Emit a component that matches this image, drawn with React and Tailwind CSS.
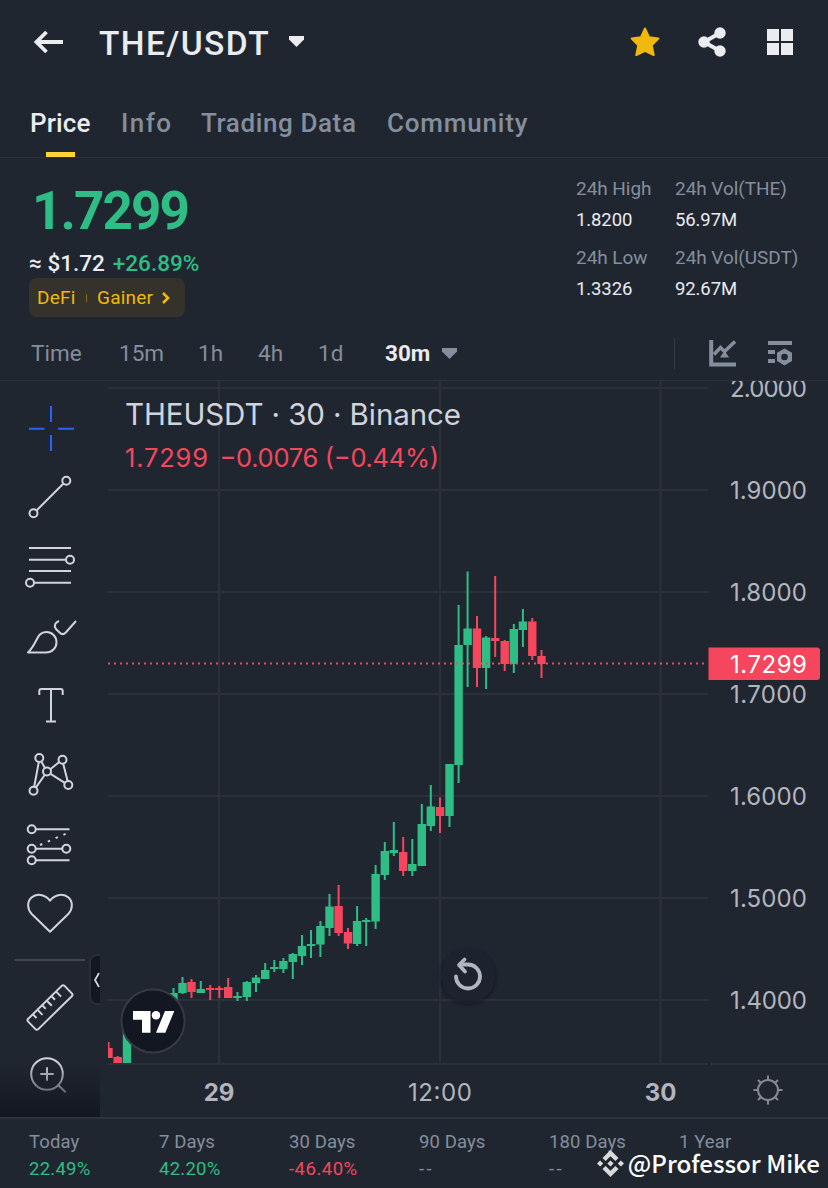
import { clsx } from 'clsx';

const tabs = [
  { label: 'Price', width: 'w-[91px]', tracking: 'tracking-[0.1px]' },
  { label: 'Info', width: 'w-[80px]', tracking: 'tracking-[1.4px]' },
  { label: 'Trading Data', width: 'w-[186px]', tracking: 'tracking-[0.6px]' },
  { label: 'Community', width: 'w-[150px]', tracking: 'tracking-[0.8px]' },
];

const stats = [
  { label: '24h High', value: '1.8200' },
  { label: '24h Vol(THE)', value: '56.97M' },
  { label: '24h Low', value: '1.3326' },
  { label: '24h Vol(USDT)', value: '92.67M' },
];

const intervals = [
  { label: 'Time', width: 'w-[88px]' },
  { label: '15m', width: 'w-[79px]' },
  { label: '1h', width: 'w-[60px]' },
  { label: '4h', width: 'w-[60px]' },
  { label: '1d', width: 'w-[67px]' },
];

const performance = [
  { label: 'Today', value: '22.49%', color: 'text-[#2ebd85] tracking-[0.25px]' },
  { label: '7 Days', value: '42.20%', color: 'text-[#2ebd85] tracking-[0.25px]' },
  { label: '30 Days', value: '-46.40%', color: 'text-[#f6465d] tracking-[0.5px]' },
  { label: '90 Days', value: '--', color: 'text-[#848e9c] tracking-[2.5px]' },
  { label: '180 Days', value: '--', color: 'text-[#848e9c] tracking-[2.5px]' },
  { label: '1 Year', value: '--', color: 'text-[#848e9c] tracking-[2.5px]' },
];

// x, high, body top, body bottom, low, up
const candles = [
  [108.5, 1042, 1048, 1058, 1058, false],
  [117.7, 1056, 1057, 1063, 1063, false],
  [127, 1015, 1015, 1063, 1063, true],
  [173.5, 988, 993, 1001, 1001, true],
  [182.5, 977, 983, 993, 994, true],
  [191.5, 979, 982, 992, 998, false],
  [200.8, 981, 989, 993, 993, true],
  [210.2, 985, 988, 990, 1000, false],
  [219.3, 986, 988, 990, 998, false],
  [228.2, 978, 987, 998, 998, false],
  [237.5, 992, 996, 998, 1001, true],
  [246.8, 981, 982, 997, 1001, true],
  [256, 975, 977.5, 983, 992, true],
  [265.2, 963, 970, 979, 979, true],
  [274.3, 960, 967, 969, 972, true],
  [283.4, 958, 961, 969, 973, true],
  [292.8, 953, 954, 962, 979, true],
  [302, 935, 946, 956, 965, true],
  [311, 930, 944, 946, 958, true],
  [320.4, 921, 926, 944.5, 957, true],
  [329.5, 894, 906.5, 928, 936, true],
  [338.6, 885, 906, 933, 936, false],
  [348, 928, 932, 943.5, 949, false],
  [357.1, 906, 921, 944, 946, true],
  [366.2, 918, 920, 922, 946, true],
  [375.6, 865, 874, 921.5, 929, true],
  [384.8, 842, 851, 875, 880, true],
  [393.8, 822, 850, 853, 856, true],
  [403.2, 837, 852, 871, 876, false],
  [412.3, 839, 864, 871, 876, true],
  [421.8, 804, 824, 866, 866, true],
  [430.8, 785, 806.5, 826, 831, true],
  [440, 797.5, 807, 816, 833, false],
  [449.5, 764, 764, 816, 827, true],
  [458.6, 605, 645, 765, 783, true],
  [467.6, 571.5, 628.5, 645, 687, true],
  [477, 616, 628.5, 668, 687, false],
  [486.1, 636, 637.5, 668, 689, true],
  [495.2, 576, 638, 641, 657, false],
  [504.7, 640, 641, 664, 671, false],
  [513.8, 624, 629, 664, 673, true],
  [522.9, 609, 621.5, 630, 647, true],
  [532.3, 618, 621.5, 656, 660, false],
  [541.5, 650, 656, 664, 678, false],
];

const priceTicks = [
  { label: '2.0000', y: 388 },
  { label: '1.9000', y: 490 },
  { label: '1.8000', y: 592 },
  { label: '1.7000', y: 694 },
  { label: '1.6000', y: 796 },
  { label: '1.5000', y: 898 },
  { label: '1.4000', y: 1000 },
];

const Caret = ({ className }) => (
  <svg className={className} width="15" height="11" viewBox="0 0 15 11" fill="currentColor">
    <path d="M0 0h15v3.500L7.500 11 0 3.500z" />
  </svg>
);

const Header = () => (
  <header className="flex h-[84px] items-center pl-[34px] pr-[35px] text-[#eaecef]">
    <svg width="30" height="24" viewBox="0 0 30 24" fill="none" stroke="currentColor" strokeWidth="3.8">
      <path d="M2 12h27M12.500 2 2.500 12l10 10" />
    </svg>
    <h1 className="ml-[35px] mt-[3px] w-[190px] whitespace-nowrap text-[33.500px] font-medium leading-[40px] tracking-[1.4px]">
      THE/USDT
    </h1>
    <Caret className="mt-[-1px]" />
    <div className="ml-auto flex items-center">
      <svg width="30" height="30" viewBox="0 0 30 30" fill="#f0b90b" stroke="#f0b90b" strokeWidth="2" strokeLinejoin="round">
        <path d="M15 1.500 19 10.200 28.300 11.500 21.700 18.200 23.700 28 15 23.800 6.300 28 8.300 18.200 1.700 11.500 11 10.200z" />
      </svg>
      <svg className="ml-[38px]" width="28" height="30" viewBox="0 0 28 30" fill="currentColor">
        <path d="M6 15 22 6M6 15l16 9" stroke="currentColor" strokeWidth="4" />
        <circle cx="6" cy="15" r="5.700" />
        <circle cx="22" cy="6" r="5.700" />
        <circle cx="22" cy="24" r="5.700" />
      </svg>
      <div className="ml-[41px] grid grid-cols-2 gap-[2px]">
        <span className="size-[12px] bg-current" />
        <span className="size-[12px] bg-current" />
        <span className="size-[12px] bg-current" />
        <span className="size-[12px] bg-current" />
      </div>
    </div>
  </header>
);

const Tabs = () => (
  <nav className="flex h-[74px] border-b border-[#2b313a] pl-[30px]">
    {tabs.map((tab, i) => (
      <div
        key={tab.label}
        className={clsx(
          'flex flex-col whitespace-nowrap text-[26px] font-medium leading-[32px]',
          tab.width,
          tab.tracking,
          i === 0 ? 'text-[#eaecef]' : 'text-[#848e9c]'
        )}
      >
        <span className="mt-[23px]">{tab.label}</span>
        {i === 0 && <span className="ml-[16px] mt-auto h-[5px] w-[29px] bg-[#fcd535]" />}
      </div>
    ))}
  </nav>
);

const Summary = () => (
  <section className="flex h-[168px] justify-between pl-[29px]">
    <div className="flex flex-col items-start">
      <p className="ml-[3px] mt-[23px] text-[53px] font-bold leading-[60px] tracking-[-1.9px] text-[#2ebd85]">
        1.7299
      </p>
      <p className="mt-[7px] flex gap-[8px] whitespace-nowrap text-[22.500px] font-medium leading-[30px]">
        <span className="text-[#eaecef]">≈ $1.72</span>
        <span className="text-[#2ebd85]">+26.89%</span>
      </p>
      <div className="flex h-[39px] w-[156px] items-center rounded-[8px] bg-[#35322b] pl-[8px] text-[19px] text-[#f0b90b]">
        <span className="mt-[2px] w-[49px] tracking-[0.2px]">DeFi</span>
        <span className="h-[8px] w-px bg-[#8a6c16]" />
        <span className="ml-[10px] mt-[2px] w-[65px] tracking-[0.2px]">Gainer</span>
        <svg width="8" height="12" viewBox="0 0 8 12" fill="none" stroke="currentColor" strokeWidth="2.600">
          <path d="m1 1 5 5-5 5" />
        </svg>
      </div>
    </div>
    <dl className="mt-[15px] grid w-[252px] grid-cols-[99px_153px] content-start gap-y-[7px] whitespace-nowrap text-[19px]">
      {stats.map((stat) => (
        <div key={stat.label} className="h-[62px] leading-[31px]">
          <dt className="tracking-[-0.05px] text-[#848e9c]">{stat.label}</dt>
          <dd className="pt-px text-[18.500px] tracking-[-0.1px] text-[#eaecef]">{stat.value}</dd>
        </div>
      ))}
    </dl>
  </section>
);

const Intervals = () => (
  <div className="flex h-[55px] items-center border-b border-[#2b313a] pl-[31px] text-[22.500px] leading-[30px] text-[#848e9c]">
    {intervals.map((interval) => (
      <span key={interval.label} className={interval.width}>
        {interval.label}
      </span>
    ))}
    <span className="w-[57px] font-bold text-[#eaecef]">30m</span>
    <Caret />
    <span className="ml-[217px] h-[31px] w-px bg-[#333b47]" />
    <svg className="ml-[34px]" width="27" height="27" viewBox="0 0 27 27" fill="none" stroke="currentColor" strokeWidth="4">
      <path d="M2.200 0v24.500H27" />
      <path d="M5 14.500 11.500 7.500l4 4L26 1.500" strokeWidth="3.500" />
      <path d="m15.500 10.500 4.500 7h-9z" fill="currentColor" stroke="none" />
    </svg>
    <svg className="ml-[32px]" width="25" height="26" viewBox="0 0 25 26" fill="currentColor">
      <path d="M0 1h24v4H0zM0 10h7v4H0zM0 19h7v4H0z" />
      <path
        fillRule="evenodd"
        d="M16.500 8.500 24 12.700v8.300l-7.500 4.500L9 21v-8.300zM16.500 13.700a3.300 3.300 0 1 0 0 6.600 3.300 3.300 0 0 0 0-6.600z"
      />
    </svg>
  </div>
);

const Tool = ({ children }) => (
  <svg
    className="block shrink-0"
    width="100"
    height="69"
    viewBox="0 0 100 69"
    fill="none"
    stroke="#d1d4dc"
    strokeWidth="2"
  >
    {children}
  </svg>
);

const Toolbar = () => (
  <aside className="relative flex h-full w-[100px] flex-col overflow-hidden pt-[13px]">
    <Tool>
      <path stroke="#2962ff" d="M51 12v16M51 41v16M29 34.700h15.500M58 34.700h16" />
    </Tool>
    <Tool>
      <circle cx="66.300" cy="17.700" r="4" />
      <circle cx="33.500" cy="50.300" r="4" />
      <path d="M36.500 47.500 63.500 20.500" />
    </Tool>
    <Tool>
      <path d="M29 16h42M29 27.700h37M29 39h42M34 50.700h37" />
      <circle cx="70" cy="27.700" r="4" />
      <circle cx="30" cy="50.700" r="4" />
    </Tool>
    <Tool>
      <path strokeLinejoin="round" d="M28 51.500C38 42 36 31 46.500 31c5.500 0 10 4.500 10 10.200S52 51.500 46 51.500z" />
      <path d="M59 20c-4 1.500-5.500 5-3 8l3.500 3.500c2 2 4.500 1.800 6.300 0L76 20" />
    </Tool>
    <Tool>
      <path d="M39.300 25v-4q0-2 2-2h19.400q2 0 2 2v4M51 19v32.500M46 51.500h10" />
    </Tool>
    <Tool>
      <circle cx="39.300" cy="19" r="4" />
      <circle cx="62.500" cy="20.700" r="4" />
      <circle cx="47" cy="32.500" r="4" />
      <circle cx="33.500" cy="51.700" r="4" />
      <circle cx="68.300" cy="46" r="4" />
      <path d="M38.800 23 34.200 47.700M41.300 22.500l3.600 6.500M44.700 36 36 48.400M50.300 30.200l9-7.200M63.200 24.700l4.400 17.300M50.500 34.800l14.300 9" />
    </Tool>
    <Tool>
      <circle cx="31.700" cy="21.300" r="4" />
      <circle cx="31.700" cy="40.700" r="4" />
      <circle cx="66.300" cy="40.700" r="4" />
      <circle cx="31.700" cy="52.300" r="4" />
      <path d="M36 21.300h33.500M36 40.700h26.300M36 52.300h33.500" />
      <path d="M40 37l27.500-12" strokeDasharray="2.500 6" />
    </Tool>
    <Tool>
      <path
        strokeLinejoin="round"
        d="M50 54.700 31.500 36.800c-4.200-4.500-4.700-12 0-16.300 5-4.500 13.500-3.500 18.500 3.200 5-6.700 13.500-7.700 18.500-3.200 4.700 4.300 4.200 11.800 0 16.300z"
      />
    </Tool>
    <hr className="mx-auto mb-[11px] mt-[13px] h-[2px] w-[70px] shrink-0 border-0 bg-[#434651]" />
    <Tool>
      <g transform="translate(50 35.500) rotate(-44.500)">
        <rect x="-25.500" y="-7.200" width="51" height="14.400" rx="2" />
        <path d="M-17-7v5M-10.500-7v7M-4-7v5M2.500-7v7M9-7v5M15.500-7v7" />
      </g>
    </Tool>
    <Tool>
      <circle cx="47" cy="33" r="15.800" />
      <path d="M40.300 33h13.400M47 26.300v13.400M58 44l7.700 7.300" />
    </Tool>
    <div className="pointer-events-none absolute inset-x-0 bottom-0 h-[56px] bg-gradient-to-b from-[#131722]/0 to-[#131722]" />
    <button className="absolute right-[-14px] top-[573px] h-[51px] w-[25px] rounded-[8px] border-2 border-[#2a2e39] bg-[#131722]">
      <svg width="8" height="16" viewBox="0 0 8 16" className="ml-[2px]" fill="none" stroke="#d1d4dc" strokeWidth="1.800">
        <path d="M6 1 2 8l4 7" />
      </svg>
    </button>
  </aside>
);

const Candle = ({ data }) => {
  const [x, high, top, bottom, low, up] = data;
  return (
    <g fill={up ? '#2ebd85' : '#f6465d'}>
      <rect x={x - 1} y={high} width="2" height={low - high} />
      <rect x={x - 4.2} y={top} width="8.4" height={bottom - top} />
    </g>
  );
};

const Chart = () => (
  <svg
    className="block shrink-0 font-['Inter','Liberation_Sans',sans-serif]"
    width="728"
    height="736"
    viewBox="100 381 728 736"
  >
    <defs>
      <clipPath id="plot">
        <rect x="108" y="381" width="600" height="683" />
      </clipPath>
      <filter id="shadow" x="-30%" y="-30%" width="160%" height="160%">
        <feDropShadow dx="0" dy="2" stdDeviation="2" floodColor="#131722" floodOpacity="0.7" />
      </filter>
    </defs>
    <g stroke="#2b3039" strokeWidth="2">
      {priceTicks.map((tick) => (
        <path key={tick.label} d={`M108 ${tick.y}H708`} />
      ))}
      <path d="M219 381V1064M440 381V1064M660.500 381V1064" />
      <path d="M108 1064H708M711 1064H828" />
    </g>
    <g clipPath="url(#plot)">
      {candles.map((candle) => (
        <Candle key={candle[0]} data={candle} />
      ))}
    </g>
    <path d="M108 663.500H708" stroke="#f6465d" strokeWidth="2" strokeDasharray="2 4" />

    <g fill="#b2b5be" fontSize="24">
      {priceTicks.map((tick) => (
        <text key={tick.label} x="730" y={tick.y + 8.5} textLength="77">
          {tick.label}
        </text>
      ))}
    </g>
    <path d="M708.500 647.500H817q3 0 3 3v26.500q0 3-3 3H708.500z" fill="#f6465d" />
    <text x="730" y="672.500" fontSize="24" textLength="77" fill="#fff">
      1.7299
    </text>

    <text x="125" y="425" fontSize="29.500" textLength="336" fill="#d1d4dc">
      THEUSDT · 30 · Binance
    </text>
    <g fill="#f6465d" fontSize="25.500">
      <text x="125" y="467" textLength="83">
        1.7299
      </text>
      <text x="219.500" y="467" textLength="219.500">
        −0.0076 (−0.44%)
      </text>
    </g>

    <g fill="#b2b5be" fontSize="24" textAnchor="middle">
      <text x="219" y="1101" fontWeight="700">
        29
      </text>
      <text x="440" y="1101" textLength="64">
        12:00
      </text>
      <text x="660.500" y="1101" fontWeight="700">
        30
      </text>
    </g>

    <g stroke="#868993" strokeWidth="2" fill="none" transform="translate(768 1090)">
      <circle r="10" />
      <path d="M0-10v-4.500M0 10v4.500M-10 0h-4.500M10 0h4.500M-7.200-7.200-10-10M7.200-7.200 10-10M-7.200 7.200-10 10M7.200 7.200 10 10" />
    </g>

    <circle cx="153" cy="1021" r="31.500" fill="#131722" stroke="#363a45" strokeWidth="2" />
    <g fill="#fff">
      <path d="M133 1011h17.500v21.700H142V1019.800h-9z" />
      <circle cx="156" cy="1015.300" r="4.200" />
      <path d="M165 1011h9.300l-9 21.700H156z" />
    </g>

    <circle cx="468" cy="975" r="27" fill="#1e232e" filter="url(#shadow)" />
    <g fill="none" stroke="#b2b5be" strokeWidth="3.800" strokeLinecap="round" strokeLinejoin="round">
      <path d="M456 976.500a12 12 0 1 0 12-12H460" />
      <path d="M464.500 959.500 459 965l6 6.500" />
    </g>
  </svg>
);

const Performance = () => (
  <footer className="flex h-[71px] border-t-2 border-[#2e343e] pl-[29px] pt-[10px]">
    {performance.map((period) => (
      <div key={period.label} className="w-[130px] shrink-0 text-[18.500px] leading-[27px]">
        <p className="tracking-[0.1px] text-[#848e9c]">{period.label}</p>
        <p className={period.color}>{period.value}</p>
      </div>
    ))}
  </footer>
);

const Watermark = () => (
  <div className="absolute bottom-[7px] right-[8px] flex items-center whitespace-nowrap text-[24.100px] font-medium leading-[36px] text-white">
    <svg className="mr-[4px]" width="27" height="27" viewBox="0 0 27 27" fill="#d9dadc">
      <path d="M13.500 0 21.500 8l-3.100 3.100-4.900-4.900-4.900 4.900L5.500 8zM13.500 27 5.500 19l3.100-3.100 4.900 4.900 4.900-4.900 3.100 3.100zM13.500 10.400l3.100 3.100-3.100 3.100-3.100-3.100zM3.100 10.400l3.100 3.100-3.100 3.100L0 13.500zM23.900 10.400l3.100 3.100-3.100 3.100-3.100-3.100z" />
    </svg>
    <span className="font-['Noto_Sans_CJK_SC',sans-serif]">@Professor Mike</span>
  </div>
);

const App = () => {
  return (
    <div className="relative h-[1188px] w-[828px] overflow-hidden bg-[#202630] font-['Roboto','Liberation_Sans',sans-serif]">
      <Header />
      <Tabs />
      <Summary />
      <Intervals />
      <main className="flex h-[736px]">
        <Toolbar />
        <Chart />
      </main>
      <Performance />
      <Watermark />
    </div>
  );
};

export default App;
